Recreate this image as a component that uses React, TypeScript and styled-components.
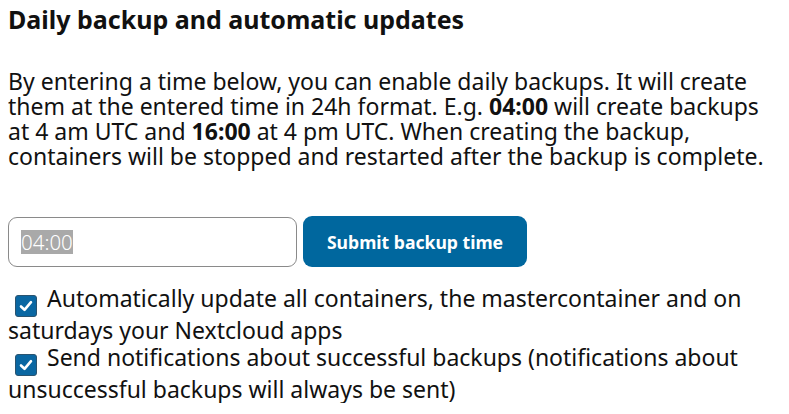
import React from "react";
import styled, { createGlobalStyle } from "styled-components";

const Global = createGlobalStyle`
  body {
    margin: 8px;
    font-family: "Noto Sans", "Open Sans", sans-serif;
    color: #111;
    background: #fff;
  }
`;

const Heading = styled.h2`
  margin: 0;
  font-size: 25px;
  font-weight: 700;
  line-height: 22px;
  color: #111;
`;

const Para = styled.p`
  margin: 39px 0 0;
  font-size: 23px;
  line-height: 25px;
`;

const Form = styled.form`
  display: flex;
  gap: 6px;
  align-items: center;
  margin-top: 47px;
`;

const FakeInput = styled.div`
  box-sizing: border-box;
  width: 289px;
  height: 50px;
  border: 1px solid #8a8a8a;
  border-radius: 9px;
  display: flex;
  align-items: center;
  padding-left: 12px;
  font-size: 20.5px;
  font-weight: 300;
`;

const Selected = styled.span`
  background: #a9a9a9;
  color: #fff;
  line-height: 24px;
`;

const Button = styled.button`
  box-sizing: border-box;
  height: 51px;
  width: 224px;
  border: none;
  border-radius: 9px;
  background: #00679e;
  color: #fff;
  font-family: "Noto Sans", sans-serif;
  font-weight: 700;
  font-size: 17.6px;
`;

const Options = styled.div`
  margin-top: 18px;
  display: flex;
  flex-direction: column;
`;

const Option = styled.label`
  display: block;
  font-size: 23px;
  line-height: 27px;
`;

const Box = styled.span`
  display: inline-flex;
  align-items: center;
  justify-content: center;
  box-sizing: border-box;
  width: 22px;
  height: 22px;
  margin: 0 10px 0 7px;
  vertical-align: -5px;
  background: #0a67a2;
  border-radius: 3px;
  border: 1px solid #2a5470;
`;

const Check = () => (
  <Box>
    <svg width="14" height="12" viewBox="0 0 14 12">
      <path d="M2 6.5 L5.5 9.8 L12 2.2" fill="none" stroke="#fff" strokeWidth="2.6" strokeLinecap="round" strokeLinejoin="round" />
    </svg>
  </Box>
);

export default function App() {
  return (
    <>
      <Global />
      <Heading>Daily backup and automatic updates</Heading>
      <Para>
        By entering a time below, you can enable daily backups. It will create them at the entered
        time in 24h format. E.g. <b>04:00</b> will create backups at 4 am UTC and <b>16:00</b> at 4 pm
        UTC. When creating the backup, containers will be stopped and restarted after the backup is
        complete.
      </Para>
      <Form onSubmit={(e) => e.preventDefault()}>
        <FakeInput>
          <Selected>04:00</Selected>
        </FakeInput>
        <Button type="submit">Submit backup time</Button>
      </Form>
      <Options>
        <Option>
          <Check />
          Automatically update all containers, the mastercontainer and on saturdays your Nextcloud apps
        </Option>
        <Option>
          <Check />
          Send notifications about successful backups (notifications about unsuccessful backups will
          always be sent)
        </Option>
      </Options>
    </>
  );
}
